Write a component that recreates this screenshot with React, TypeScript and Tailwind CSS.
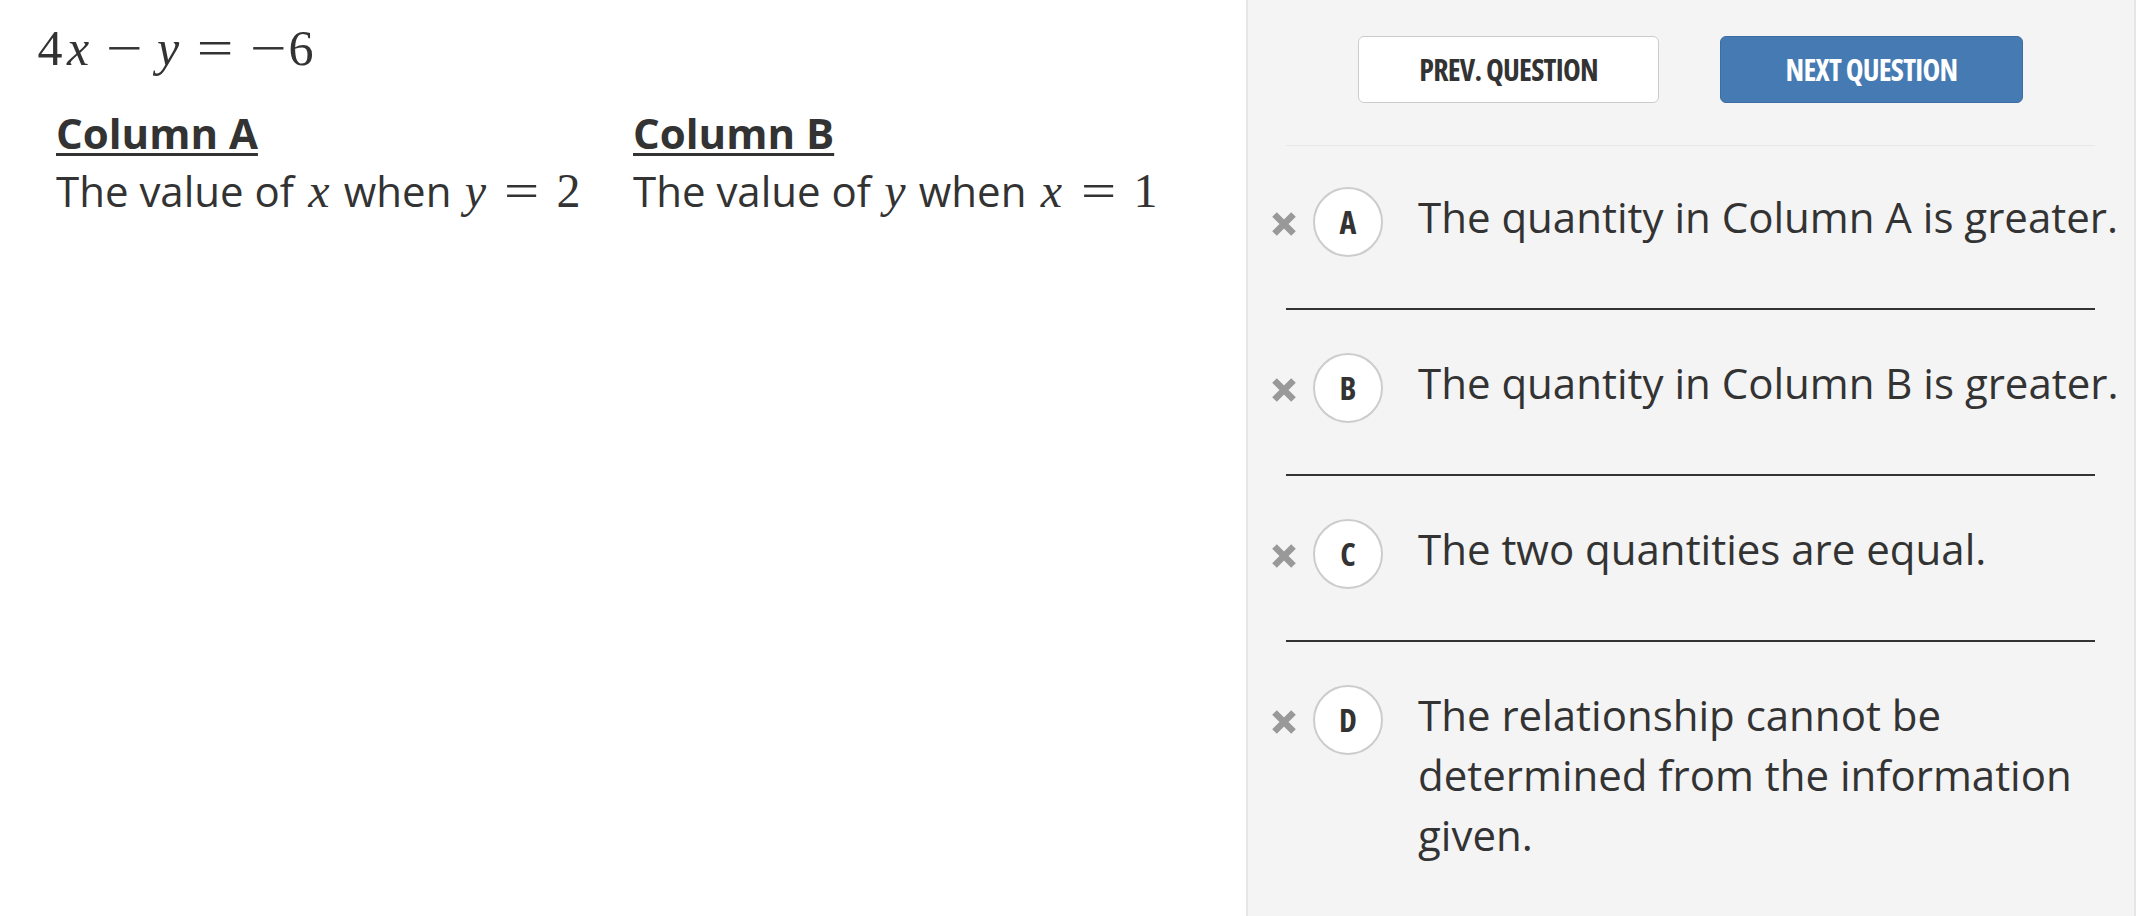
import React from "react";

const answers = [
    { letter: "A", text: "The quantity in Column A is greater." },
    { letter: "B", text: "The quantity in Column B is greater." },
    { letter: "C", text: "The two quantities are equal." },
    { letter: "D", text: "The relationship cannot be determined from the information given." },
];

function Cross() {
    return (
        <svg width="24" height="24" viewBox="0 0 24 24" className="text-[#999]">
            <path d="M2.5 2.5 L21.5 21.5 M21.5 2.5 L2.5 21.5" stroke="currentColor" strokeWidth="6.5" />
        </svg>
    );
}

// math glyph in a box sized like the typeset formula
function M({ c, w, italic, op }: { c: string; w: string; italic?: boolean; op?: boolean }) {
    return (
        <span className={`inline-block text-center leading-none ${w}`}>
            <span className={op ? "inline-block scale-x-[1.3]" : italic ? "italic" : ""}>{c}</span>
        </span>
    );
}

function Heading({ children }: { children: React.ReactNode }) {
    return (
        <div className="text-[42px] leading-[57px] font-bold underline decoration-[3px] underline-offset-[4px]">
            {children}
        </div>
    );
}

export default function App() {
    return (
        <div className="flex w-[2138px] h-[916px] bg-white text-[#333] font-['Open_Sans',sans-serif]">
            {/* question side */}
            <div className="flex-1 pl-[37px]">
                <div className="pt-[22px] text-[50px] leading-[52px] font-['Liberation_Serif',serif] whitespace-nowrap">
                    <M c="4" w="w-[26px]" />
                    <M c="x" w="w-[30px]" italic />
                    <span className="inline-block w-[11px]"></span>
                    <M c="−" w="w-[40px]" op />
                    <span className="inline-block w-[11px]"></span>
                    <M c="y" w="w-[26px]" italic />
                    <span className="inline-block w-[14px]"></span>
                    <M c="=" w="w-[40px]" op />
                    <span className="inline-block w-[14px]"></span>
                    <M c="−" w="w-[39px]" op />
                    <M c="6" w="w-[26px]" />
                </div>
                <div className="mt-[30px] flex">
                    <div className="w-[577px] pl-[19px] shrink-0">
                        <Heading>Column A</Heading>
                        <div className="text-[42px] leading-[60px] whitespace-nowrap">
                            The value of{" "}
                            <span className="font-['Liberation_Serif',serif] text-[48px]">
                                <M c="x" w="w-[28px]" italic />
                            </span>{" "}
                            when{" "}
                            <span className="font-['Liberation_Serif',serif] text-[48px]">
                                <M c="y" w="w-[26px]" italic />
                                <span className="inline-block w-[14px]"></span>
                                <M c="=" w="w-[39px]" op />
                                <span className="inline-block w-[14px]"></span>
                                <M c="2" w="w-[26px]" />
                            </span>
                        </div>
                    </div>
                    <div className="pl-[19px]">
                        <Heading>Column B</Heading>
                        <div className="text-[42px] leading-[60px] whitespace-nowrap">
                            The value of{" "}
                            <span className="font-['Liberation_Serif',serif] text-[48px]">
                                <M c="y" w="w-[26px]" italic />
                            </span>{" "}
                            when{" "}
                            <span className="font-['Liberation_Serif',serif] text-[48px]">
                                <M c="x" w="w-[28px]" italic />
                                <span className="inline-block w-[14px]"></span>
                                <M c="=" w="w-[39px]" op />
                                <span className="inline-block w-[14px]"></span>
                                <M c="1" w="w-[26px]" />
                            </span>
                        </div>
                    </div>
                </div>
            </div>

            {/* answer side */}
            <div className="w-[890px] mr-[2px] border-l-2 border-r-2 border-[#e6e6e6] bg-[#f4f4f4] pl-[38px] pr-[39px]">
                <div className="pt-[36px] flex justify-center gap-[61px]">
                    <button className="w-[301px] h-[67px] rounded-[6px] border border-[#cccccc] bg-white text-[30px] font-bold font-stretch-[75%] tracking-tight text-[#333]">
                        PREV. QUESTION
                    </button>
                    <button className="w-[303px] h-[67px] rounded-[6px] border border-[#3e6da4] bg-[#467ab3] text-[30px] font-bold font-stretch-[75%] tracking-tight text-white">
                        NEXT QUESTION
                    </button>
                </div>
                <div className="mt-[42px] border-t border-[#e8e8e8]"></div>
                {answers.map((a, i) => (
                    <div
                        key={a.letter}
                        className={
                            (i === 0 ? "pt-[41px] " : "pt-[43px] ") +
                            (i < answers.length - 1
                                ? "relative flex items-start pb-[51px] border-b-2 border-[#333]"
                                : "relative flex items-start")
                        }
                    >
                        <div className={i === 0 ? "absolute left-[-14px] top-[66px]" : "absolute left-[-14px] top-[68px]"}>
                            <Cross />
                        </div>
                        <div className="ml-[27px] w-[70px] h-[70px] shrink-0 rounded-full border-2 border-[#cccccc] bg-white flex items-center justify-center text-[32px] font-bold font-stretch-[75%]">
                            {a.letter}
                        </div>
                        <div className="ml-[35px] w-[715px] shrink-0 text-[42px] leading-[60px]">
                            {a.text}
                        </div>
                    </div>
                ))}
            </div>
        </div>
    );
}
